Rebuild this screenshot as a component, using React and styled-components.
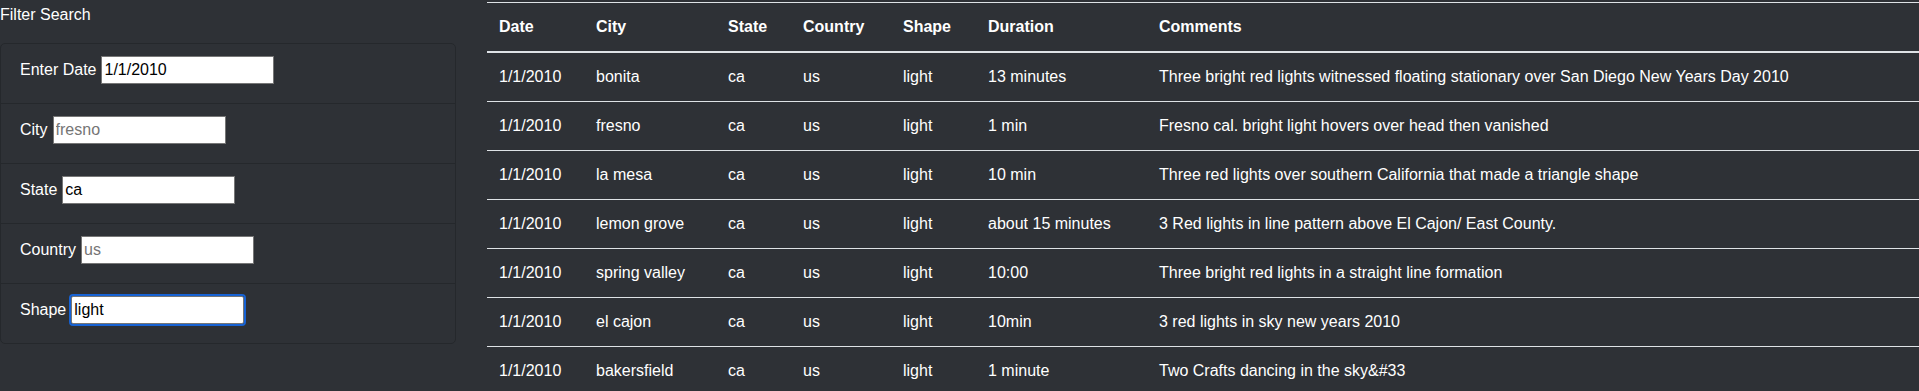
import React from "react";
import styled, { createGlobalStyle } from "styled-components";

const GlobalStyle = createGlobalStyle`
  html, body {
    margin: 0;
    padding: 0;
    background: #2e3136;
    color: #fff;
    font-family: "Liberation Sans", Arial, sans-serif;
    font-size: 16px;
    overflow: hidden;
  }
`;

const filters = [
  { id: "date", label: "Enter Date", value: "1/1/2010" },
  { id: "city", label: "City", placeholder: "fresno" },
  { id: "state", label: "State", value: "ca" },
  { id: "country", label: "Country", placeholder: "us" },
  { id: "shape", label: "Shape", value: "light", focused: true },
];

const sightings = [
  ["bonita", "13 minutes", "Three bright red lights witnessed floating stationary over San Diego New Years Day 2010"],
  ["fresno", "1 min", "Fresno cal. bright light hovers over head then vanished"],
  ["la mesa", "10 min", "Three red lights over southern California that made a triangle shape"],
  ["lemon grove", "about 15 minutes", "3 Red lights in line pattern above El Cajon/ East County."],
  ["spring valley", "10:00", "Three bright red lights in a straight line formation"],
  ["el cajon", "10min", "3 red lights in sky new years 2010"],
  ["bakersfield", "1 minute", "Two Crafts dancing in the sky&#33"],
];

const columns = [
  { name: "Date", width: 97 },
  { name: "City", width: 132 },
  { name: "State", width: 75 },
  { name: "Country", width: 100 },
  { name: "Shape", width: 85 },
  { name: "Duration", width: 171 },
  { name: "Comments" },
];

function App() {
  return (
    <Page>
      <GlobalStyle />
      <Sidebar>
        <SideTitle>Filter Search</SideTitle>
        <FilterList>
          {filters.map(f => (
            <FilterItem key={f.id}>
              <FilterLabel htmlFor={f.id}>{f.label}</FilterLabel>
              <FilterInput
                id={f.id}
                type="text"
                defaultValue={f.value}
                placeholder={f.placeholder}
                $focused={f.focused}
              />
            </FilterItem>
          ))}
        </FilterList>
      </Sidebar>
      <TableArea>
        <Table>
          <colgroup>
            {columns.map(c => (
              <col key={c.name} style={c.width ? { width: c.width } : undefined} />
            ))}
          </colgroup>
          <thead>
            <tr>
              {columns.map(c => (
                <Th key={c.name}>{c.name}</Th>
              ))}
            </tr>
          </thead>
          <tbody>
            {sightings.map(([city, duration, comment]) => (
              <tr key={city}>
                <Td>1/1/2010</Td>
                <Td>{city}</Td>
                <Td>ca</Td>
                <Td>us</Td>
                <Td>light</Td>
                <Td>{duration}</Td>
                <Td>{comment}</Td>
              </tr>
            ))}
          </tbody>
        </Table>
      </TableArea>
    </Page>
  );
}

export default App;

const Page = styled.div`
  display: flex;
  align-items: flex-start;
  gap: 31px;
  width: 100%;
  height: 391px;
`;

const Sidebar = styled.div`
  width: 456px;
  flex-shrink: 0;
`;

const SideTitle = styled.div`
  padding-top: 3px;
  line-height: 24px;
  height: 43px;
  box-sizing: border-box;
`;

const FilterList = styled.ul`
  list-style: none;
  margin: 0;
  padding: 0;
  border: 1px solid #25282c;
  border-radius: 5px;
`;

const FilterItem = styled.li`
  display: flex;
  align-items: center;
  gap: 5px;
  padding: 12px 19px 19px;
  border-top: 1px solid #25282c;

  &:first-child {
    border-top: none;
  }
`;

const FilterLabel = styled.label`
  color: #fff;
  font-size: 16px;
  line-height: 24px;
`;

const FilterInput = styled.input`
  width: 173px;
  height: 28px;
  box-sizing: border-box;
  margin: 0;
  padding: 1px 2px;
  border: 1px solid #767676;
  border-radius: ${p => (p.$focused ? "2px" : "0")};
  outline: ${p => (p.$focused ? "2px solid #1762d3" : "none")};
  background: #fff;
  color: #000;
  font-family: "Liberation Sans", Arial, sans-serif;
  font-size: 16px;

  &::placeholder {
    color: #757575;
  }
`;

const TableArea = styled.div`
  flex: 1;
  min-width: 0;
  padding-top: 2px;
`;

const Table = styled.table`
  width: 100%;
  table-layout: fixed;
  border-collapse: collapse;
  color: #fff;
  font-family: "Liberation Sans", Arial, sans-serif;
  font-size: 16px;
`;

const Th = styled.th`
  text-align: left;
  font-weight: 700;
  padding: 12px;
  line-height: 24px;
  border-top: 1px solid #dee2e6;
  border-bottom: 2px solid #dee2e6;
  white-space: nowrap;
`;

const Td = styled.td`
  padding: 12px;
  line-height: 24px;
  border-bottom: 1px solid #dee2e6;
  white-space: nowrap;
  overflow: hidden;
`;
